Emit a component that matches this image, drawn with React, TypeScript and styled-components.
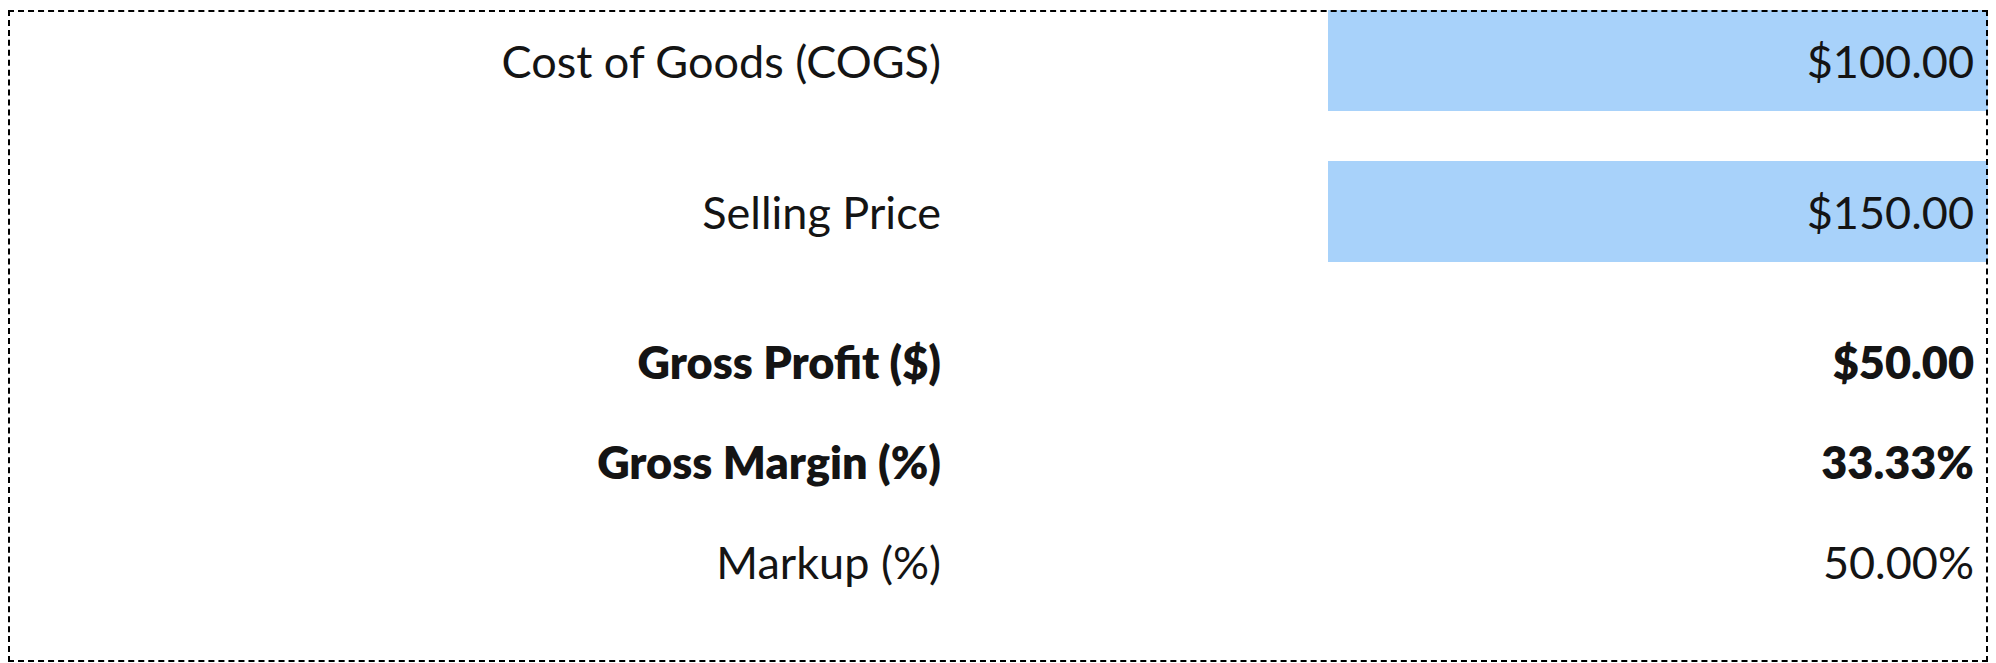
import React from 'react';
import styled, { createGlobalStyle } from 'styled-components';

const GlobalStyle = createGlobalStyle`
  body {
    margin: 8px;
    background: #ffffff;
    font-family: Lato, "Liberation Sans", sans-serif;
    color: #141414;
  }
`;

const Calculator = styled.div`
  margin-top: 2px;
  outline: 2px dashed #000000;
  outline-offset: -2px;
  padding-bottom: 50px;
`;

const Row = styled.div<{ $input?: boolean }>`
  display: grid;
  grid-template-columns: 2fr 1fr;
  height: ${(p) => (p.$input ? '101px' : '100px')};
  margin-bottom: ${(p) => (p.$input ? '50px' : '0')};
`;

const Label = styled.div<{ $bold?: boolean }>`
  display: flex;
  align-items: center;
  justify-content: flex-end;
  padding-right: 387px;
  font-size: 45px;
  font-weight: ${(p) => (p.$bold ? 800 : 400)};
  white-space: nowrap;
`;

const Value = styled.div<{ $bold?: boolean; $input?: boolean }>`
  display: flex;
  align-items: center;
  justify-content: flex-end;
  padding-right: 14px;
  background: ${(p) => (p.$input ? '#a8d2fa' : 'transparent')};
  font-size: 45px;
  font-weight: ${(p) => (p.$bold ? 800 : 400)};
`;

interface Line {
  label: string;
  value: string;
  input?: boolean;
  bold?: boolean;
}

const lines: Line[] = [
  { label: 'Cost of Goods (COGS)', value: '$100.00', input: true },
  { label: 'Selling Price', value: '$150.00', input: true },
  { label: 'Gross Profit ($)', value: '$50.00', bold: true },
  { label: 'Gross Margin (%)', value: '33.33%', bold: true },
  { label: 'Markup (%)', value: '50.00%' },
];

const App: React.FC = () => {
  return (
    <>
      <GlobalStyle />
      <Calculator>
        {lines.map((line) => (
          <Row key={line.label} $input={line.input}>
            <Label $bold={line.bold}>{line.label}</Label>
            <Value $bold={line.bold} $input={line.input}>
              {line.value}
            </Value>
          </Row>
        ))}
      </Calculator>
    </>
  );
};

export default App;
